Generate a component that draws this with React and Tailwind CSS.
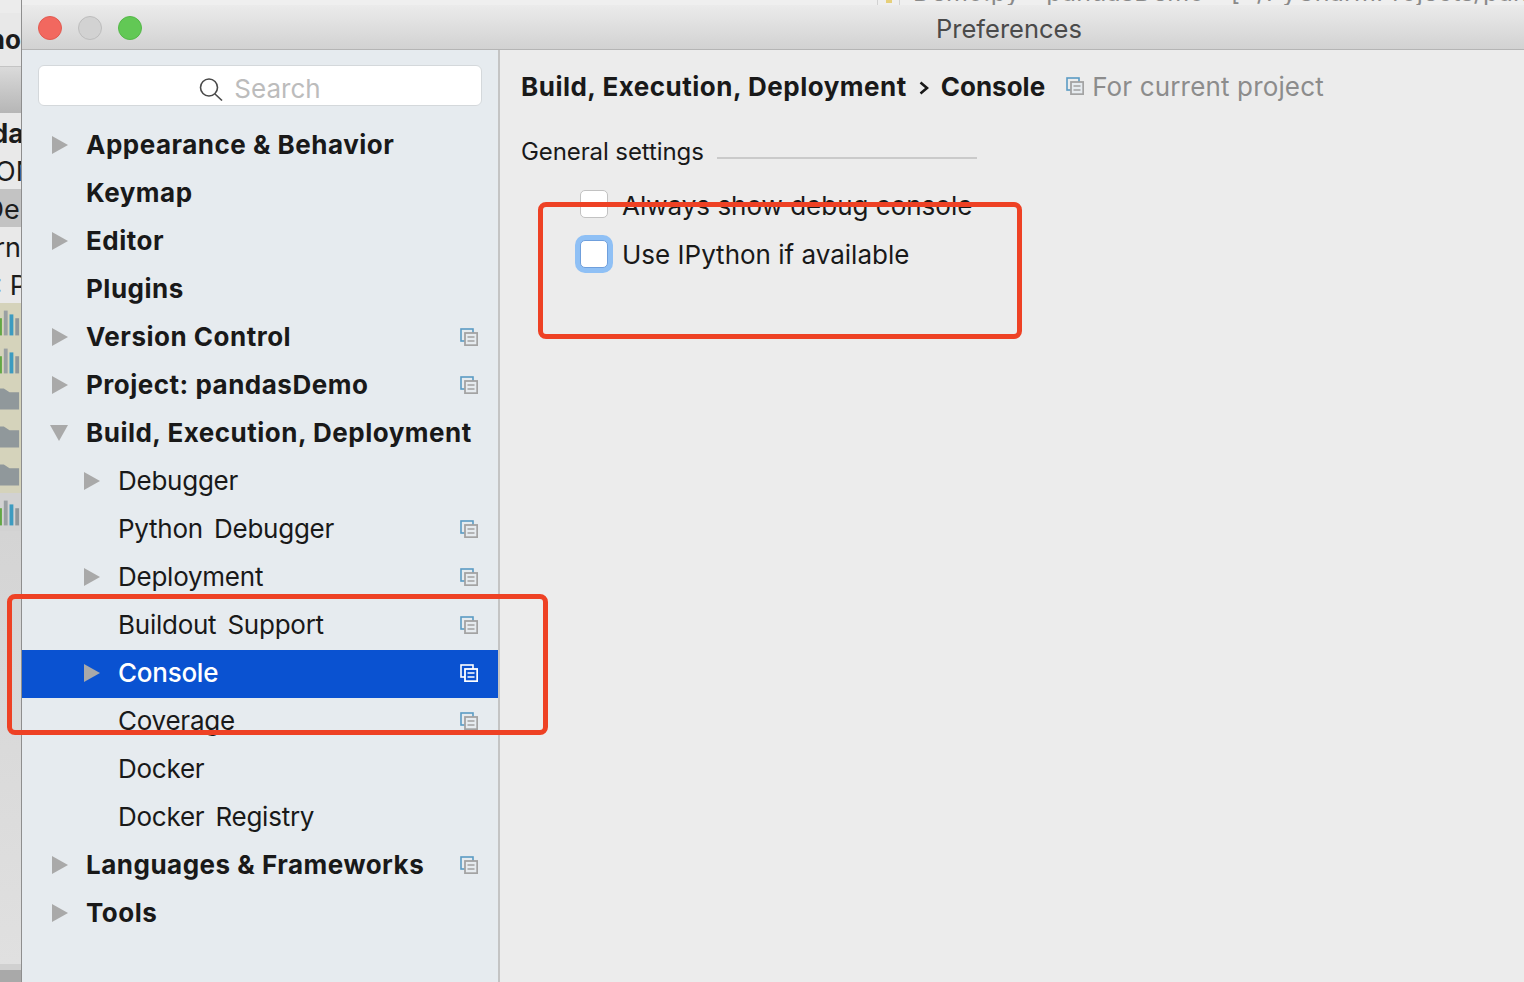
import React from 'react';

const FONT = "font-['Inter','Liberation_Sans',sans-serif]";

const TREE = [
  { label: 'Appearance & Behavior', bold: true, arrow: 'right' },
  { label: 'Keymap', bold: true },
  { label: 'Editor', bold: true, arrow: 'right' },
  { label: 'Plugins', bold: true },
  { label: 'Version Control', bold: true, arrow: 'right', scoped: true },
  { label: 'Project: pandasDemo', bold: true, arrow: 'right', scoped: true },
  { label: 'Build, Execution, Deployment', bold: true, arrow: 'down' },
  { label: 'Debugger', sub: true, arrow: 'right' },
  { label: 'Python Debugger', sub: true, scoped: true },
  { label: 'Deployment', sub: true, arrow: 'right', scoped: true },
  { label: 'Buildout Support', sub: true, scoped: true },
  { label: 'Console', sub: true, arrow: 'right', scoped: true, selected: true },
  { label: 'Coverage', sub: true, scoped: true },
  { label: 'Docker', sub: true },
  { label: 'Docker Registry', sub: true },
  { label: 'Languages & Frameworks', bold: true, arrow: 'right', scoped: true },
  { label: 'Tools', bold: true, arrow: 'right' },
];

function ScopeIcon({ selected, className = '' }) {
  const back = selected ? '#ffffff' : '#5b9bc4';
  const front = selected ? '#ffffff' : '#a3a3a3';
  const fill = selected ? '#0a52d1' : '#e6ebef';
  return (
    <svg width="18" height="18" viewBox="0 0 18 18" className={className}>
      <rect x="1" y="1" width="12" height="12" fill="none" stroke={back} strokeWidth="1.6" />
      <rect x="5" y="5" width="12.2" height="12.2" fill={fill} stroke={front} strokeWidth="1.8" />
      <path d="M7.5 9h7M7.5 13h7" stroke={front} strokeWidth="1.6" />
    </svg>
  );
}

function Arrow({ dir }) {
  if (dir === 'down') {
    return (
      <svg width="18" height="16" viewBox="0 0 18 16" className="-ml-0.5">
        <path d="M0 0h18L9 16z" fill="#a9a9a9" />
      </svg>
    );
  }
  return (
    <svg width="16" height="18" viewBox="0 0 16 18">
      <path d="M0 0l16 9L0 18z" fill="#a9a9a9" />
    </svg>
  );
}

function TreeRow({ label, bold, sub, arrow, scoped, selected }) {
  const weight = bold
    ? 'font-bold tracking-[0.5px]'
    : selected
      ? 'font-medium tracking-[-0.25px]'
      : 'font-normal tracking-[-0.25px] [word-spacing:4px]';
  return (
    <div className={`flex h-12 items-center pb-0.5 pr-[20px] ${sub ? 'pl-[62px]' : 'pl-[30px]'} ${selected ? 'bg-[#0a52d1] text-white' : 'text-[#191919]'}`}>
      <div className="flex w-[34px] shrink-0 items-center">{arrow && <Arrow dir={arrow} />}</div>
      <span className={`flex-1 whitespace-nowrap text-[26px] leading-none ${weight}`}>
        {label}
      </span>
      {scoped && <ScopeIcon selected={selected} />}
    </div>
  );
}

function Bars() {
  return (
    <svg width="22" height="26" viewBox="0 0 22 26">
      <rect x="-2" y="8" width="4" height="18" fill="#62a744" />
      <rect x="4" y="0" width="4" height="26" fill="#9aa0a3" />
      <rect x="10" y="4" width="4" height="22" fill="#3c9bc0" />
      <rect x="16" y="8" width="4" height="18" fill="#8f979b" />
    </svg>
  );
}

function Folder() {
  return (
    <svg width="22" height="24" viewBox="0 0 22 24">
      <path d="M0 0h4l6 4h10v18H0z" fill="#90989b" />
    </svg>
  );
}

// the IDE window peeking out behind the dialog
function BackgroundStrip() {
  const textRow = 'flex h-[38px] items-center justify-end overflow-hidden whitespace-nowrap pt-1 text-[27px] text-[#1c1c1c]';
  return (
    <div className="flex w-[22px] shrink-0 flex-col overflow-hidden border-r border-[#8e8e8e] bg-[#d6d6d6]">
      <div className="h-[13px] bg-[#ececec]" />
      <div className="flex h-[54px] items-center justify-end overflow-hidden border-b border-[#c4c4c4] bg-[#e8e8e8] text-[26px] font-bold text-[#1c1c1c]">no</div>
      <div className="h-[46px] bg-gradient-to-b from-[#dadada] to-[#b6b6b6]" />
      <div className={`${textRow} bg-[#e9e9e9] font-bold`}><span className="-mr-[3px]">da</span></div>
      <div className={`${textRow} bg-[#e9e9e9]`}><span className="-mr-[15px]">ON</span></div>
      <div className={`${textRow} bg-[#c3c3c3]`}><span className="-mr-[9px]">Der</span></div>
      <div className={`${textRow} bg-[#e9e9e9]`}>rn</div>
      <div className={`${textRow} bg-[#e9e9e9]`}><span className="-mr-[6px]">: P</span></div>
      <div className="flex h-[38px] items-end bg-[#d5d3bb] pb-[5px]"><Bars /></div>
      <div className="flex h-[38px] items-end bg-[#d5d3bb] pb-[5px]"><Bars /></div>
      <div className="flex h-[38px] items-end bg-[#d5d3bb] pb-[5px]"><Folder /></div>
      <div className="flex h-[38px] items-end bg-[#d5d3bb] pb-[5px]"><Folder /></div>
      <div className="flex h-[38px] items-end bg-[#d5d3bb] pb-[5px]"><Folder /></div>
      <div className="flex h-[38px] items-end bg-[#d2d2d2] pb-[5px]"><Bars /></div>
      <div className="flex-1 bg-gradient-to-b from-[#d4d4d4] to-[#e0e0e0]" />
      <div className="h-[6px] bg-[#d0d0d0]" />
      <div className="h-[12px] bg-[#a9a9a9]" />
    </div>
  );
}

function TitleBar() {
  return (
    <div className="flex h-[45px] shrink-0 items-center border-b border-[#b5b5b5] bg-gradient-to-b from-[#ebebeb] to-[#d2d2d2] pl-4 pt-0.5">
      <div className="flex gap-4">
        <span className="h-6 w-6 rounded-full border border-[#e25a50] bg-[#f2685f]" />
        <span className="h-6 w-6 rounded-full border border-[#bdbdbd] bg-[#d2d2d2]" />
        <span className="h-6 w-6 rounded-full border border-[#54b848] bg-[#62c855]" />
      </div>
      <span className="ml-[794px] mt-0.5 whitespace-nowrap text-[25.5px] text-[#4a4a4a]">Preferences</span>
    </div>
  );
}

function Sidebar() {
  return (
    <div className="flex w-[478px] shrink-0 flex-col border-r-2 border-[#c4c4c4] bg-[#e6ebef]">
      <div className="mx-4 mt-[15px] flex h-[41px] items-center justify-center gap-[11px] rounded-md border border-[#d4d8db] bg-white pt-[6px]">
        <svg width="24" height="24" viewBox="0 0 24 24" fill="none" stroke="#4a4a4a" strokeWidth="1.6">
          <circle cx="10" cy="10.5" r="8.5" />
          <path d="M16 17l7 6.5" />
        </svg>
        <span className="text-[26px] leading-none text-[#bcbcbc]">Search</span>
      </div>
      <div className="mt-[16px]">
        {TREE.map(row => <TreeRow key={row.label} {...row} />)}
      </div>
    </div>
  );
}

function Checkbox({ focused }) {
  return (
    <span className={`h-[28px] w-[28px] shrink-0 rounded-[5px] bg-white ${focused ? 'border border-[#6f9fdc] shadow-[0_0_0_5px_#8fc0f5]' : 'border border-[#c2c2c2]'}`} />
  );
}

function ConsolePanel() {
  return (
    <div className="flex-1 bg-[#ececec] pl-[21px] text-[#191919]">
      <div className="mt-[18px] flex h-[36px] items-center whitespace-nowrap text-[26px]">
        <span className="font-bold tracking-[0.5px]">Build, Execution, Deployment</span>
        <svg width="10" height="14" viewBox="0 0 10 14" fill="none" stroke="#191919" strokeWidth="2.6" className="mx-[12px] mt-1">
          <path d="M1.5 1.5L8 7l-6.5 5.5" />
        </svg>
        <span className="font-bold">Console</span>
        <ScopeIcon className="ml-[21px]" />
        <span className="ml-[8px] tracking-[0.15px] text-[#8c8c8c]">For current project</span>
      </div>
      <div className="mt-[30px] flex h-[36px] items-center text-[24px] tracking-[-0.1px]">
        <span className="whitespace-nowrap">General settings</span>
        <span className="ml-[13px] mt-3 h-0.5 w-[260px] bg-[#cacaca]" />
      </div>
      <div className="ml-[59px] mt-[16px] flex h-[36px] items-center gap-[14px] whitespace-nowrap text-[26px]">
        <Checkbox />
        <span className="mt-0.5">Always show debug console</span>
      </div>
      <div className="ml-[59px] mt-[14px] flex h-[36px] items-center gap-[14px] whitespace-nowrap text-[26px]">
        <Checkbox focused />
        <span>Use IPython if available</span>
      </div>
    </div>
  );
}

export default function App() {
  return (
    <div className={`relative flex h-[982px] w-[1524px] overflow-hidden bg-[#e8e8e8] ${FONT}`}>
      <BackgroundStrip />
      <div className="flex min-w-0 flex-1 flex-col">
        {/* window title behind the dialog, cut off by its top edge */}
        <div className="flex h-[5px] items-end overflow-hidden bg-[#efefef] pl-[855px] text-[25px] leading-none tracking-[0.2px] text-[#8a8a8a]">
          <span className="mr-[13px] flex h-full w-[23px] shrink-0 justify-center border-x border-[#d2d2d2]">
            <span className="h-[3px] w-[6px] bg-[#e6cf7a]" />
          </span>
          <span className="whitespace-nowrap">Demo.py - pandasDemo - [~/PyCharmProjects/pan</span>
        </div>
        <div className="flex flex-1 flex-col overflow-hidden rounded-tl-lg">
          <TitleBar />
          <div className="flex flex-1">
            <Sidebar />
            <ConsolePanel />
          </div>
        </div>
      </div>
      {/* red annotation boxes drawn on the screenshot */}
      <div className="absolute left-[538px] top-[202px] h-[137px] w-[484px] rounded-lg border-[5px] border-[#ee4124]" />
      <div className="absolute left-[7px] top-[594px] h-[141px] w-[541px] rounded-lg border-[5px] border-[#ee4124]" />
    </div>
  );
}
